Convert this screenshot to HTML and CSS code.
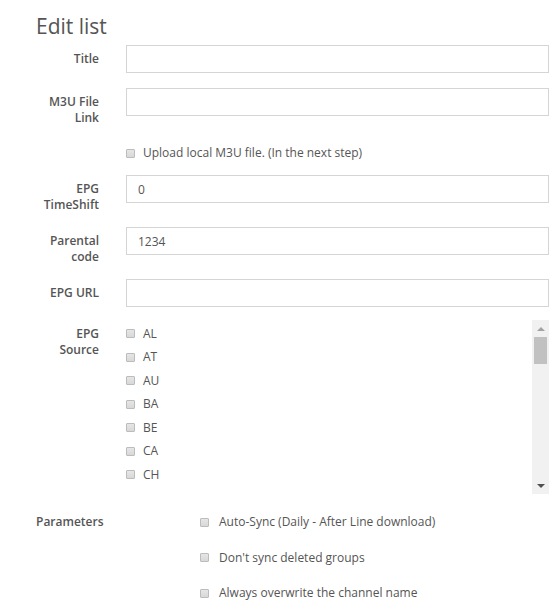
FILE: index.html
```html
<!DOCTYPE html>
<html>
<head>
<meta charset="utf-8">
<link rel="stylesheet" href="styles.css">
</head>
<body>
<div class="page">
  <h1 class="title">Edit list</h1>
  <form class="form">
    <div class="row">
      <label class="lbl">Title</label>
      <input class="field" type="text" value="">
    </div>
    <div class="row">
      <label class="lbl">M3U File Link</label>
      <input class="field" type="text" value="">
    </div>
    <div class="check-row">
      <label class="check"><input type="checkbox" class="cb"><span>Upload local M3U file. (In the next step)</span></label>
    </div>
    <div class="row">
      <label class="lbl">EPG TimeShift</label>
      <input class="field" type="text" value="0">
    </div>
    <div class="row">
      <label class="lbl">Parental code</label>
      <input class="field" type="text" value="1234">
    </div>
    <div class="row">
      <label class="lbl">EPG URL</label>
      <input class="field" type="text" value="">
    </div>
    <div class="row row-list">
      <label class="lbl">EPG Source</label>
      <div class="listbox">
        <div class="list">
          <label class="item"><input type="checkbox" class="cb"><span>AL</span></label>
          <label class="item"><input type="checkbox" class="cb"><span>AT</span></label>
          <label class="item"><input type="checkbox" class="cb"><span>AU</span></label>
          <label class="item"><input type="checkbox" class="cb"><span>BA</span></label>
          <label class="item"><input type="checkbox" class="cb"><span>BE</span></label>
          <label class="item"><input type="checkbox" class="cb"><span>CA</span></label>
          <label class="item"><input type="checkbox" class="cb"><span>CH</span></label>
        </div>
        <div class="sbar" aria-hidden="true">
          <div class="sbtn sbtn-up"><span class="tri tri-up"></span></div>
          <div class="strack"><div class="sthumb"></div></div>
          <div class="sbtn sbtn-down"><span class="tri tri-down"></span></div>
        </div>
      </div>
    </div>
    <div class="params">
      <div class="params-label">Parameters</div>
      <div class="params-options">
        <label class="opt"><input type="checkbox" class="cb"><span>Auto-Sync (Daily - After Line download)</span></label>
        <label class="opt"><input type="checkbox" class="cb"><span>Don't sync deleted groups</span></label>
        <label class="opt"><input type="checkbox" class="cb"><span>Always overwrite the channel name</span></label>
      </div>
    </div>
  </form>
</div>
</body>
</html>
```
FILE: styles.css
```css
html, body {
  margin: 0;
  padding: 0;
  background: #ffffff;
}
body {
  font-family: "Open Sans", "Liberation Sans", sans-serif;
  font-size: 12px;
  color: #555555;
}
.page {
  padding: 0 11px 0 36px;
}
.title {
  margin: 0;
  padding-top: 12px;
  height: 33px;
  font-size: 21px;
  line-height: 28px;
  font-weight: 400;
  color: #555555;
}
.form {
  margin: 0;
}
.row {
  display: grid;
  grid-template-columns: 63px 423px;
  column-gap: 27px;
  align-items: start;
  margin-bottom: 15px;
}
.lbl {
  text-align: right;
  font-weight: 600;
  font-size: 12px;
  line-height: 16px;
  padding-top: 6px;
  margin-bottom: -1px;
  color: #555555;
}
.field {
  box-sizing: border-box;
  height: 28px;
  width: 100%;
  margin: 0;
  border: 1px solid #d5d5d5;
  border-radius: 0;
  padding: 0 11px;
  font-family: "Open Sans", "Liberation Sans", sans-serif;
  font-size: 12px;
  color: #555555;
  background: #ffffff;
  outline: none;
}
.cb {
  appearance: none;
  -webkit-appearance: none;
  box-sizing: border-box;
  width: 9px;
  height: 9px;
  margin: 0 8px 0 0;
  border: 1px solid #bcbcbc;
  border-radius: 1px;
  background: linear-gradient(#e6e6e6, #d8d8d8);
  flex: none;
}
.check-row {
  padding: 3px 0 0 90px;
  height: 20px;
  margin-bottom: 12px;
}
.check, .item, .opt {
  display: flex;
  align-items: center;
  line-height: 20px;
  color: #555555;
}
.row-list {
  margin-top: -2px;
  margin-bottom: 18px;
}
.listbox {
  display: flex;
  height: 174px;
}
.list {
  flex: 1;
  box-sizing: border-box;
  padding-top: 2px;
  overflow: hidden;
}
.item {
  height: 23.5px;
}
.sbar {
  width: 17px;
  flex: none;
  display: flex;
  flex-direction: column;
  background: #f1f1f1;
}
.sbtn {
  height: 17px;
  flex: none;
  display: flex;
  align-items: center;
  justify-content: center;
}
.tri {
  width: 0;
  height: 0;
  border-left: 4px solid transparent;
  border-right: 4px solid transparent;
}
.tri-up {
  border-bottom: 4px solid #a3a3a3;
}
.tri-down {
  border-top: 4px solid #505050;
}
.strack {
  flex: 1;
  padding: 0 2px;
}
.sthumb {
  height: 27px;
  background: #c1c1c1;
}
.params {
  display: grid;
  grid-template-columns: 164px 1fr;
}
.params-label {
  font-weight: 600;
  line-height: 20px;
  color: #555555;
}
.opt {
  height: 20px;
  margin-bottom: 15.5px;
}
.opt .cb {
  margin-right: 10px;
}
```
